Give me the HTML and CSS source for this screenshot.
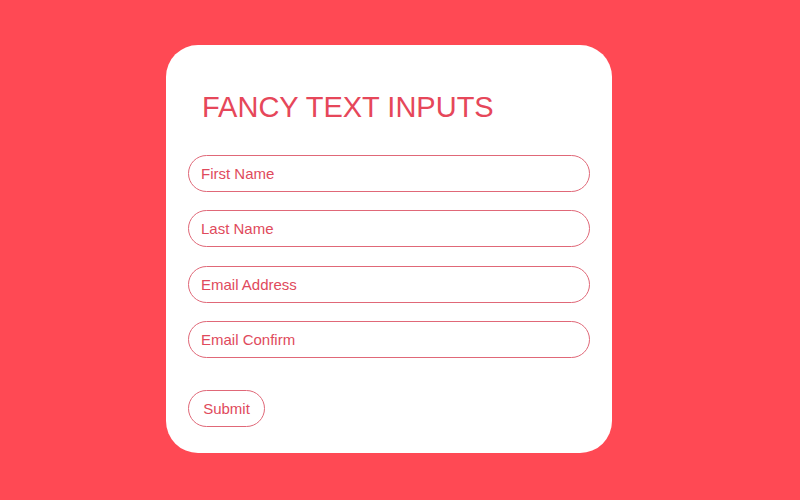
FILE: index.html
```html
<!DOCTYPE html>
<html>
<head>
<meta charset="utf-8">
<link rel="stylesheet" href="styles.css">
</head>
<body>
<div class="page">
  <div class="card">
    <h1 class="title">FANCY TEXT INPUTS</h1>
    <form class="form">
      <input class="field" type="text" placeholder="First Name">
      <input class="field" type="text" placeholder="Last Name">
      <input class="field" type="text" placeholder="Email Address">
      <input class="field" type="text" placeholder="Email Confirm">
      <button class="submit" type="button">Submit</button>
    </form>
  </div>
</div>
</body>
</html>
```
FILE: styles.css
```css
html, body {
  margin: 0;
  padding: 0;
  background: #ff4954;
  font-family: "Liberation Sans", Arial, sans-serif;
}
.page {
  padding: 45px 0 0 166px;
}
.card {
  width: 446px;
  height: 408px;
  box-sizing: border-box;
  background: #fff;
  border-radius: 32px;
  padding: 0 22px 26px;
}
.title {
  margin: 0 0 0 14px;
  padding-top: 46px;
  font-size: 29px;
  line-height: 33px;
  font-weight: normal;
  color: #e6475a;
}
.form {
  display: flex;
  flex-direction: column;
  align-items: flex-start;
  gap: 18.4px;
  margin-top: 31px;
}
.field {
  width: 100%;
  height: 37px;
  box-sizing: border-box;
  border: 1px solid #e06878;
  border-radius: 19px;
  padding: 0 12px;
  font-family: "Liberation Sans", Arial, sans-serif;
  font-size: 15px;
  color: #e04a5c;
  background: #fff;
  outline: none;
}
.field::placeholder {
  color: #e04a5c;
  opacity: 1;
}
.submit {
  margin-top: 13.6px;
  width: 77px;
  height: 37px;
  box-sizing: border-box;
  border: 1px solid #e06878;
  border-radius: 19px;
  background: #fff;
  font-family: "Liberation Sans", Arial, sans-serif;
  font-size: 15px;
  color: #e04a5c;
  padding: 0;
}
```
